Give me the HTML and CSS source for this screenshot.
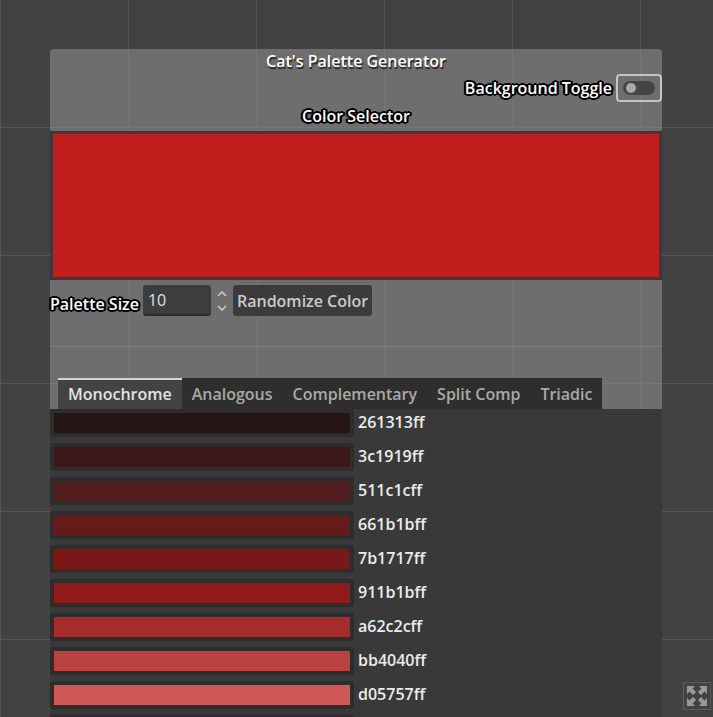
FILE: index.html
```html
<!DOCTYPE html>
<html lang="en">
<head>
    <meta charset="UTF-8">
    <meta name="viewport" content="width=device-width, initial-scale=1.0">
    <title>Cat's Palette Generator</title>
    <link rel="stylesheet" href="styles.css">
</head>
<body>
    <div class="panel">
        <div class="top">
            <div class="title">Cat's Palette Generator</div>
            <div class="toggle-row">
                <span class="outlined">Background Toggle</span>
                <button class="toggle"><span class="knob"></span></button>
            </div>
            <div class="section outlined">Color Selector</div>
            <div class="picker"><div class="picker-color"></div></div>
            <div class="controls">
                <span class="outlined size-label">Palette Size</span>
                <div class="spin">
                    <div class="spin-edit">10</div>
                    <div class="spin-arrows">
                        <svg width="12" height="26" viewBox="0 0 12 26">
                            <path d="M2 8 L6 4 L10 8" fill="none" stroke="#c8c8c8" stroke-width="1.6"/>
                            <path d="M2 18 L6 22 L10 18" fill="none" stroke="#c8c8c8" stroke-width="1.6"/>
                        </svg>
                    </div>
                </div>
                <button class="btn">Randomize Color</button>
            </div>
            <div class="separator"></div>
            <div class="tabs">
                <div class="tab active">Monochrome</div>
                <div class="tab">Analogous</div>
                <div class="tab">Complementary</div>
                <div class="tab">Split Comp</div>
                <div class="tab">Triadic</div>
            </div>
        </div>
        <div class="tab-body" id="swatches"></div>
    </div>

    <div class="fullscreen">
        <svg width="26" height="26" viewBox="0 0 26 26">
            <g fill="#9a9a9a">
                <path d="M3 3 H11 L8.5 5.5 L12 9 L9 12 L5.5 8.5 L3 11 Z"/>
                <path d="M23 3 V11 L20.5 8.5 L17 12 L14 9 L17.5 5.5 L15 3 Z"/>
                <path d="M3 23 V15 L5.5 17.5 L9 14 L12 17 L8.5 20.5 L11 23 Z"/>
                <path d="M23 23 H15 L17.5 20.5 L14 17 L17 14 L20.5 17.5 L23 15 Z"/>
            </g>
        </svg>
    </div>

    <script>
        const colors = ['261313', '3c1919', '511c1c', '661b1b', '7b1717', '911b1b', 'a62c2c', 'bb4040', 'd05757'];

        const list = document.getElementById('swatches');
        colors.forEach(c => {
            const row = document.createElement('div');
            row.className = 'swatch-row';
            row.innerHTML = `<div class="swatch"><div class="swatch-fill" style="background:#${c}"></div></div><span class="hex">${c}ff</span>`;
            list.appendChild(row);
        });
        // last row is only peeking in at the bottom edge
        const peek = document.createElement('div');
        peek.className = 'swatch-row';
        peek.innerHTML = '<div class="swatch"><div class="swatch-fill" style="background:#e57373"></div></div>';
        list.appendChild(peek);
    </script>
</body>
</html>
```

FILE: styles.css
```css
body {
    margin: 0;
    height: 717px;
    overflow: hidden;
    font-family: "Open Sans", "Noto Sans", sans-serif;
    font-weight: 600;
    font-size: 16px;
    color: #e8e8e8;
    background-color: #424242;
    background-image:
        linear-gradient(to right, #555555 1px, transparent 1px),
        linear-gradient(to bottom, #555555 1px, transparent 1px);
    background-size: 128px 128px;
    background-position: 128px 127px;
}
.panel {
    width: 612px;
    margin: 49px 0 0 50px;
}
.top {
    background: rgba(132, 132, 132, 0.67);
    border-radius: 4px 4px 0 0;
    display: flex;
    flex-direction: column;
}
.outlined {
    color: #fff;
    text-shadow:
        -2px 0 0 #000, 2px 0 0 #000, 0 -2px 0 #000, 0 2px 0 #000,
        -1px -1px 0 #000, 1px -1px 0 #000, -1px 1px 0 #000, 1px 1px 0 #000,
        -2px 1px 0 #000, 2px 1px 0 #000, -2px -1px 0 #000, 2px -1px 0 #000;
}
.title {
    height: 23px;
    line-height: 23px;
    padding-top: 1px;
    text-align: center;
    color: #fff;
    text-shadow: 1px 2px 1px rgba(0, 0, 0, 0.7);
}
.toggle-row {
    height: 28px;
    margin-top: 1px;
    display: flex;
    justify-content: flex-end;
    align-items: center;
    gap: 4px;
}
.toggle {
    width: 46px;
    height: 28px;
    padding: 0;
    background: transparent;
    border: 2px solid #c4c4c4;
    border-radius: 4px;
    display: flex;
    align-items: center;
    justify-content: center;
    box-sizing: border-box;
}
.toggle .knob {
    width: 32px;
    height: 14px;
    border-radius: 7px;
    background: #464646;
    position: relative;
}
.toggle .knob::before {
    content: "";
    position: absolute;
    left: 3px;
    top: 2px;
    width: 10px;
    height: 10px;
    border-radius: 50%;
    background: #a9a9a9;
}
.section {
    height: 23px;
    line-height: 23px;
    margin-top: 3px;
    text-align: center;
}
.picker {
    margin-top: 3px;
    height: 149px;
    background: #3a3a3a;
    padding: 3px;
    box-sizing: border-box;
}
.picker-color {
    height: 100%;
    background: #c11d1d;
}
.controls {
    margin-top: 5px;
    height: 31px;
    display: flex;
    align-items: center;
    gap: 4px;
}
.size-label {
    padding-top: 7px;
}
.spin {
    display: flex;
    align-items: center;
    gap: 4px;
}
.spin-edit {
    width: 68px;
    height: 31px;
    box-sizing: border-box;
    background: #3d3d3d;
    border-bottom: 2px solid #2c2c2c;
    border-radius: 3px;
    padding: 2px 0 0 5px;
    line-height: 27px;
    color: #e0e0e0;
    font-weight: 400;
}
.spin-arrows {
    width: 14px;
    display: flex;
    justify-content: center;
}
.btn {
    height: 31px;
    padding: 0 4px;
    background: #3b3b3b;
    border: none;
    border-radius: 3px;
    font-family: inherit;
    font-weight: 600;
    font-size: 16px;
    color: #cbcbcb;
}
.separator {
    margin-top: 30px;
    height: 1px;
    background: #7e7e7e;
}
.tabs {
    margin-top: 31px;
    padding-left: 8px;
    display: flex;
    height: 31px;
}
.tab {
    padding: 1px 10px 0;
    line-height: 30px;
    background: #2e2e2e;
    color: #a9a9a9;
}
.tab.active {
    background: #434343;
    color: #e2e2e2;
    border-top: 2px solid #d4d4d4;
    padding-top: 0;
    line-height: 29px;
}
.tab-body {
    background: #393939;
    height: 330px;
    display: flex;
    flex-direction: column;
    gap: 6px;
}
.swatch-row {
    display: flex;
    align-items: flex-start;
    gap: 4px;
}
.swatch {
    width: 304px;
    height: 28px;
    box-sizing: border-box;
    padding: 4px;
    background: #2d2d2d;
    border-radius: 3px;
    flex: none;
}
.swatch-fill {
    height: 100%;
}
.hex {
    color: #ececec;
    line-height: 26px;
}
.fullscreen {
    position: absolute;
    left: 683px;
    top: 682px;
    width: 28px;
    height: 28px;
    border: 1px solid #5c5c5c;
    box-sizing: border-box;
    display: flex;
    align-items: center;
    justify-content: center;
}
```
